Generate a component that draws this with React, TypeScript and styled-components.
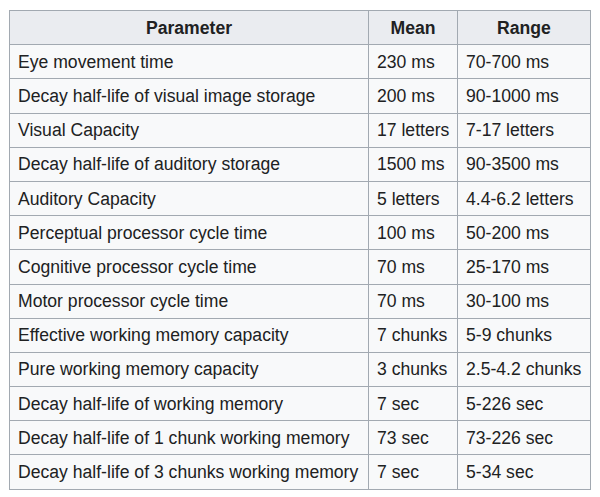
import React from 'react';
import styled, { createGlobalStyle } from 'styled-components';

const GlobalStyle = createGlobalStyle`
  body {
    margin: 0;
    background: #ffffff;
    font-family: "Liberation Sans", Arial, sans-serif;
  }
`;

const Page = styled.div`
  padding: 10px 0 0 9px;
`;

const Table = styled.table`
  width: 581px;
  table-layout: fixed;
  border-collapse: collapse;
  border: 1px solid #a2a9b1;
  background: #f8f9fa;
  color: #202122;
  font-size: 17.6px;
  line-height: 22px;
`;

const HeadCell = styled.th`
  background: #eaecf0;
  border: 1px solid #a2a9b1;
  padding: 5.6px 8px;
  font-weight: bold;
  text-align: center;
`;

const Cell = styled.td`
  border: 1px solid #a2a9b1;
  padding: 5.6px 8px;
  text-align: left;
  white-space: nowrap;
`;

interface Param {
  name: string;
  mean: string;
  range: string;
}

const rows: Param[] = [
  { name: 'Eye movement time', mean: '230 ms', range: '70-700 ms' },
  { name: 'Decay half-life of visual image storage', mean: '200 ms', range: '90-1000 ms' },
  { name: 'Visual Capacity', mean: '17 letters', range: '7-17 letters' },
  { name: 'Decay half-life of auditory storage', mean: '1500 ms', range: '90-3500 ms' },
  { name: 'Auditory Capacity', mean: '5 letters', range: '4.4-6.2 letters' },
  { name: 'Perceptual processor cycle time', mean: '100 ms', range: '50-200 ms' },
  { name: 'Cognitive processor cycle time', mean: '70 ms', range: '25-170 ms' },
  { name: 'Motor processor cycle time', mean: '70 ms', range: '30-100 ms' },
  { name: 'Effective working memory capacity', mean: '7 chunks', range: '5-9 chunks' },
  { name: 'Pure working memory capacity', mean: '3 chunks', range: '2.5-4.2 chunks' },
  { name: 'Decay half-life of working memory', mean: '7 sec', range: '5-226 sec' },
  { name: 'Decay half-life of 1 chunk working memory', mean: '73 sec', range: '73-226 sec' },
  { name: 'Decay half-life of 3 chunks working memory', mean: '7 sec', range: '5-34 sec' },
];

const App = () => {
  return (
    <Page>
      <GlobalStyle />
      <Table>
        <colgroup>
          <col style={{ width: 359 }} />
          <col style={{ width: 89 }} />
          <col style={{ width: 133 }} />
        </colgroup>
        <thead>
          <tr>
            <HeadCell>Parameter</HeadCell>
            <HeadCell>Mean</HeadCell>
            <HeadCell>Range</HeadCell>
          </tr>
        </thead>
        <tbody>
          {rows.map((r) => (
            <tr key={r.name}>
              <Cell>{r.name}</Cell>
              <Cell>{r.mean}</Cell>
              <Cell>{r.range}</Cell>
            </tr>
          ))}
        </tbody>
      </Table>
    </Page>
  );
};

export default App;
